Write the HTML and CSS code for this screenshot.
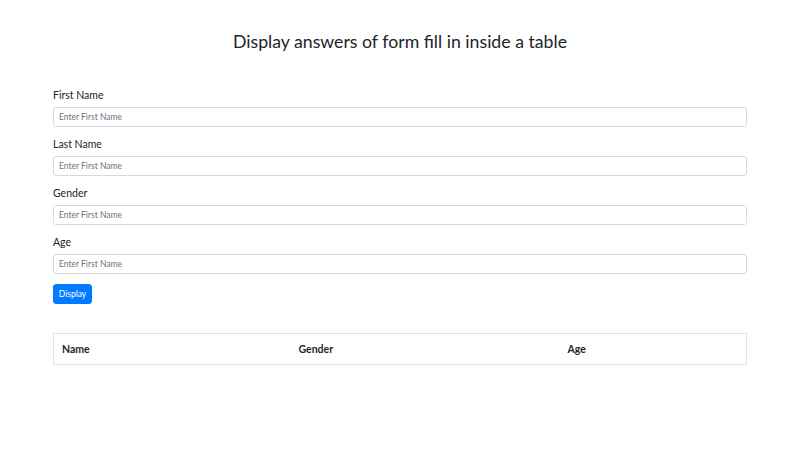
FILE: index.html
```html
<!DOCTYPE html>
<html>
<head>
<meta charset="utf-8">
<link rel="stylesheet" href="styles.css">
</head>
<body>
<div class="container">
  <h1 class="title">Display answers of form fill in inside a table</h1>
  <form class="form">
    <div class="group">
      <label>First Name</label>
      <input type="text" placeholder="Enter First Name">
    </div>
    <div class="group">
      <label>Last Name</label>
      <input type="text" placeholder="Enter First Name">
    </div>
    <div class="group">
      <label>Gender</label>
      <input type="text" placeholder="Enter First Name">
    </div>
    <div class="group">
      <label>Age</label>
      <input type="text" placeholder="Enter First Name">
    </div>
    <button type="button" class="btn">Display</button>
  </form>
  <table class="table">
    <thead>
      <tr>
        <th class="c1">Name</th>
        <th class="c2">Gender</th>
        <th class="c3">Age</th>
      </tr>
    </thead>
  </table>
</div>
</body>
</html>
```
FILE: styles.css
```css
* { box-sizing: border-box; }
body {
  margin: 0;
  font-family: "Lato", "Open Sans", sans-serif;
  color: #212529;
  background: #fff;
}
.container {
  width: 694px;
  margin: 0 auto;
  padding-top: 30px;
}
.title {
  font-weight: 400;
  font-size: 17.7px;
  text-align: center;
  margin: 0 0 34px 0;
  line-height: 24px;
}
.form {
  display: flex;
  flex-direction: column;
}
.group {
  display: flex;
  flex-direction: column;
  margin-bottom: 10px;
}
.group label {
  font-size: 10.5px;
  line-height: 14px;
  margin-bottom: 5px;
}
.group input {
  height: 20px;
  border: 1px solid #d6dadf;
  border-radius: 3px;
  padding: 0 5px;
  font-family: inherit;
  font-size: 8.5px;
  color: #495057;
}
.group input::placeholder { color: #6c757d; }
.btn {
  align-self: flex-start;
  background: #007bff;
  color: #fff;
  border: 1px solid #007bff;
  border-radius: 3px;
  font-family: inherit;
  font-size: 8.5px;
  height: 20px;
  width: 39px;
  padding: 0;
  margin-top: 0;
}
.table {
  margin-top: 29px;
  width: 100%;
  border-collapse: collapse;
  border: 1px solid #dee2e6;
}
.table th {
  text-align: left;
  font-size: 10.5px;
  font-weight: 700;
  padding: 0 8px;
  height: 31px;
}
.c1 { width: 237px; }
.c2 { width: 269px; }
```
